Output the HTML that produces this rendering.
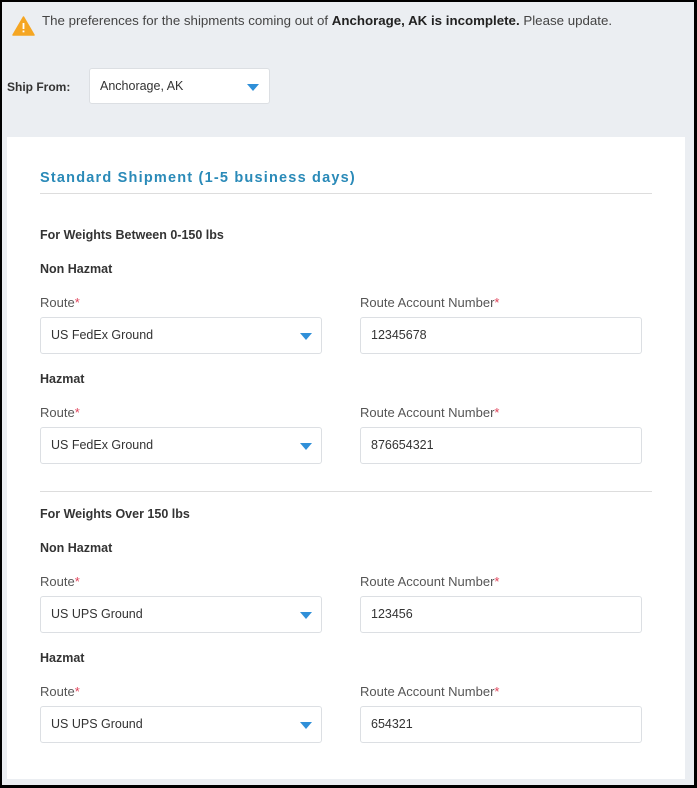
<!DOCTYPE html>
<html><head><style>
*{box-sizing:border-box;margin:0;padding:0}
body{width:697px;height:788px;background:#000;font-family:"Liberation Sans",sans-serif;color:#333;position:relative;overflow:hidden}
.frame{position:absolute;left:2px;top:2px;width:692px;height:783px;background:#ebeef2}
.card{position:absolute;left:7px;top:137px;width:678px;height:642px;background:#fff}
.a{position:absolute}
.t{font-size:13.3px;color:#444}
.b{font-weight:bold;font-size:12.5px;color:#333}
.lbl{font-size:13px;color:#555}
.lbl i{color:#e0435a;font-style:normal}
.box{position:absolute;height:37px;border:1px solid #dcdfe3;border-radius:3px;background:#fff;font-size:12.5px;color:#333;padding-left:10px;line-height:35px}
.car{position:absolute;right:9px;top:15px;width:0;height:0;border-left:6px solid transparent;border-right:6px solid transparent;border-top:7px solid #2f8fd8}
.hr{position:absolute;left:40px;width:612px;height:1px;background:#ddd}
</style></head><body>
<div class="frame"></div>
<svg class="a" style="left:12px;top:16px" width="23" height="20" viewBox="0 0 23 20"><path d="M11.5 1 L22 19 H1 Z" fill="#f5a623" stroke="#f5a623" stroke-linejoin="round" stroke-width="1.5"/><rect x="10.6" y="7" width="1.8" height="6" fill="#fff"/><rect x="10.6" y="14.5" width="1.8" height="1.8" fill="#fff"/></svg>
<div class="a t" style="left:42px;top:13px">The preferences for the shipments coming out of <b style="color:#222">Anchorage, AK is incomplete.</b> Please update.</div>
<div class="a b" style="left:7px;top:80px;font-size:12px">Ship From:</div>
<div class="box" style="left:89px;top:68px;width:181px;height:36px">Anchorage, AK<div class="car" style="top:15px;right:10px"></div></div>
<div class="card"></div>
<div class="a" style="left:40px;top:170px;font-size:14.5px;font-weight:bold;color:#2a8ab8;letter-spacing:1.2px">Standard Shipment (1-5 business days)</div>
<div class="hr" style="top:193px"></div>
<div class="a b" style="left:40px;top:228px">For Weights Between 0-150 lbs</div>
<div class="a b" style="left:40px;top:262px">Non Hazmat</div>
<div class="a lbl" style="left:40px;top:295px">Route<i>*</i></div>
<div class="a lbl" style="left:360px;top:295px">Route Account Number<i>*</i></div>
<div class="box" style="left:40px;top:317px;width:282px">US FedEx Ground<div class="car"></div></div>
<div class="box" style="left:360px;top:317px;width:282px">12345678</div>
<div class="a b" style="left:40px;top:372px">Hazmat</div>
<div class="a lbl" style="left:40px;top:405px">Route<i>*</i></div>
<div class="a lbl" style="left:360px;top:405px">Route Account Number<i>*</i></div>
<div class="box" style="left:40px;top:427px;width:282px">US FedEx Ground<div class="car"></div></div>
<div class="box" style="left:360px;top:427px;width:282px">876654321</div>
<div class="hr" style="top:491px"></div>
<div class="a b" style="left:40px;top:507px">For Weights Over 150 lbs</div>
<div class="a b" style="left:40px;top:541px">Non Hazmat</div>
<div class="a lbl" style="left:40px;top:574px">Route<i>*</i></div>
<div class="a lbl" style="left:360px;top:574px">Route Account Number<i>*</i></div>
<div class="box" style="left:40px;top:596px;width:282px">US UPS Ground<div class="car"></div></div>
<div class="box" style="left:360px;top:596px;width:282px">123456</div>
<div class="a b" style="left:40px;top:651px">Hazmat</div>
<div class="a lbl" style="left:40px;top:684px">Route<i>*</i></div>
<div class="a lbl" style="left:360px;top:684px">Route Account Number<i>*</i></div>
<div class="box" style="left:40px;top:706px;width:282px">US UPS Ground<div class="car"></div></div>
<div class="box" style="left:360px;top:706px;width:282px">654321</div>
</body></html>
